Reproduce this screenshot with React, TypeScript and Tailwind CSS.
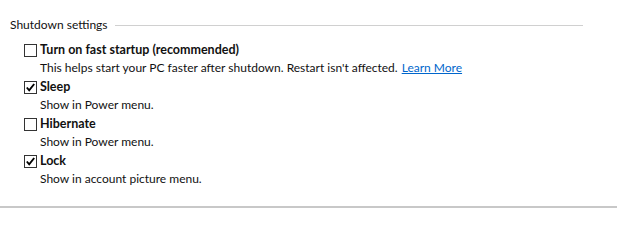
import React from "react";

const Check = () => (
  <svg width="11" height="11" viewBox="0 0 11 11" className="block">
    <path d="M1.8 5.5 L4.2 8.3 L9.2 2" fill="none" stroke="#000" strokeWidth="1.9" />
  </svg>
);

function Item({ title, desc, checked, link }: { title: string; desc: string; checked?: boolean; link?: boolean }) {
  return (
    <div className="flex flex-col">
      <div className="flex items-center h-[18px]">
        <div className="w-[13px] h-[13px] border border-[#333] bg-white box-border flex items-center justify-center">
          {checked && <Check />}
        </div>
        <span className="ml-[3px] font-bold text-[12.5px]">{title}</span>
      </div>
      <div className="pl-[16px] h-[18px] flex items-center">
        <span>{desc}</span>
        {link && (
          <a className="ml-[4px] text-[#0066cc] underline">Learn More</a>
        )}
      </div>
    </div>
  );
}

export default function App() {
  return (
    <div
      className="w-[617px] h-[211px] bg-white text-[#111] text-[12px] relative overflow-hidden"
      style={{ fontFamily: 'Lato, "Open Sans", sans-serif' }}
    >
      <div className="flex items-center pt-[16px] h-[34px] pl-[10px] pr-[34px]">
        <span>Shutdown settings</span>
        <div className="flex-1 ml-[7px] h-px bg-[#d0d0d0]" />
      </div>
      <div className="pl-[24px] pt-[7px] flex flex-col gap-px">
        <Item title="Turn on fast startup (recommended)" desc="This helps start your PC faster after shutdown. Restart isn't affected." link />
        <Item title="Sleep" desc="Show in Power menu." checked />
        <Item title="Hibernate" desc="Show in Power menu." />
        <Item title="Lock" desc="Show in account picture menu." checked />
      </div>
      <div className="absolute left-0 right-0 top-[206px] h-[2px] bg-[#c8c8c8]" />
    </div>
  );
}
